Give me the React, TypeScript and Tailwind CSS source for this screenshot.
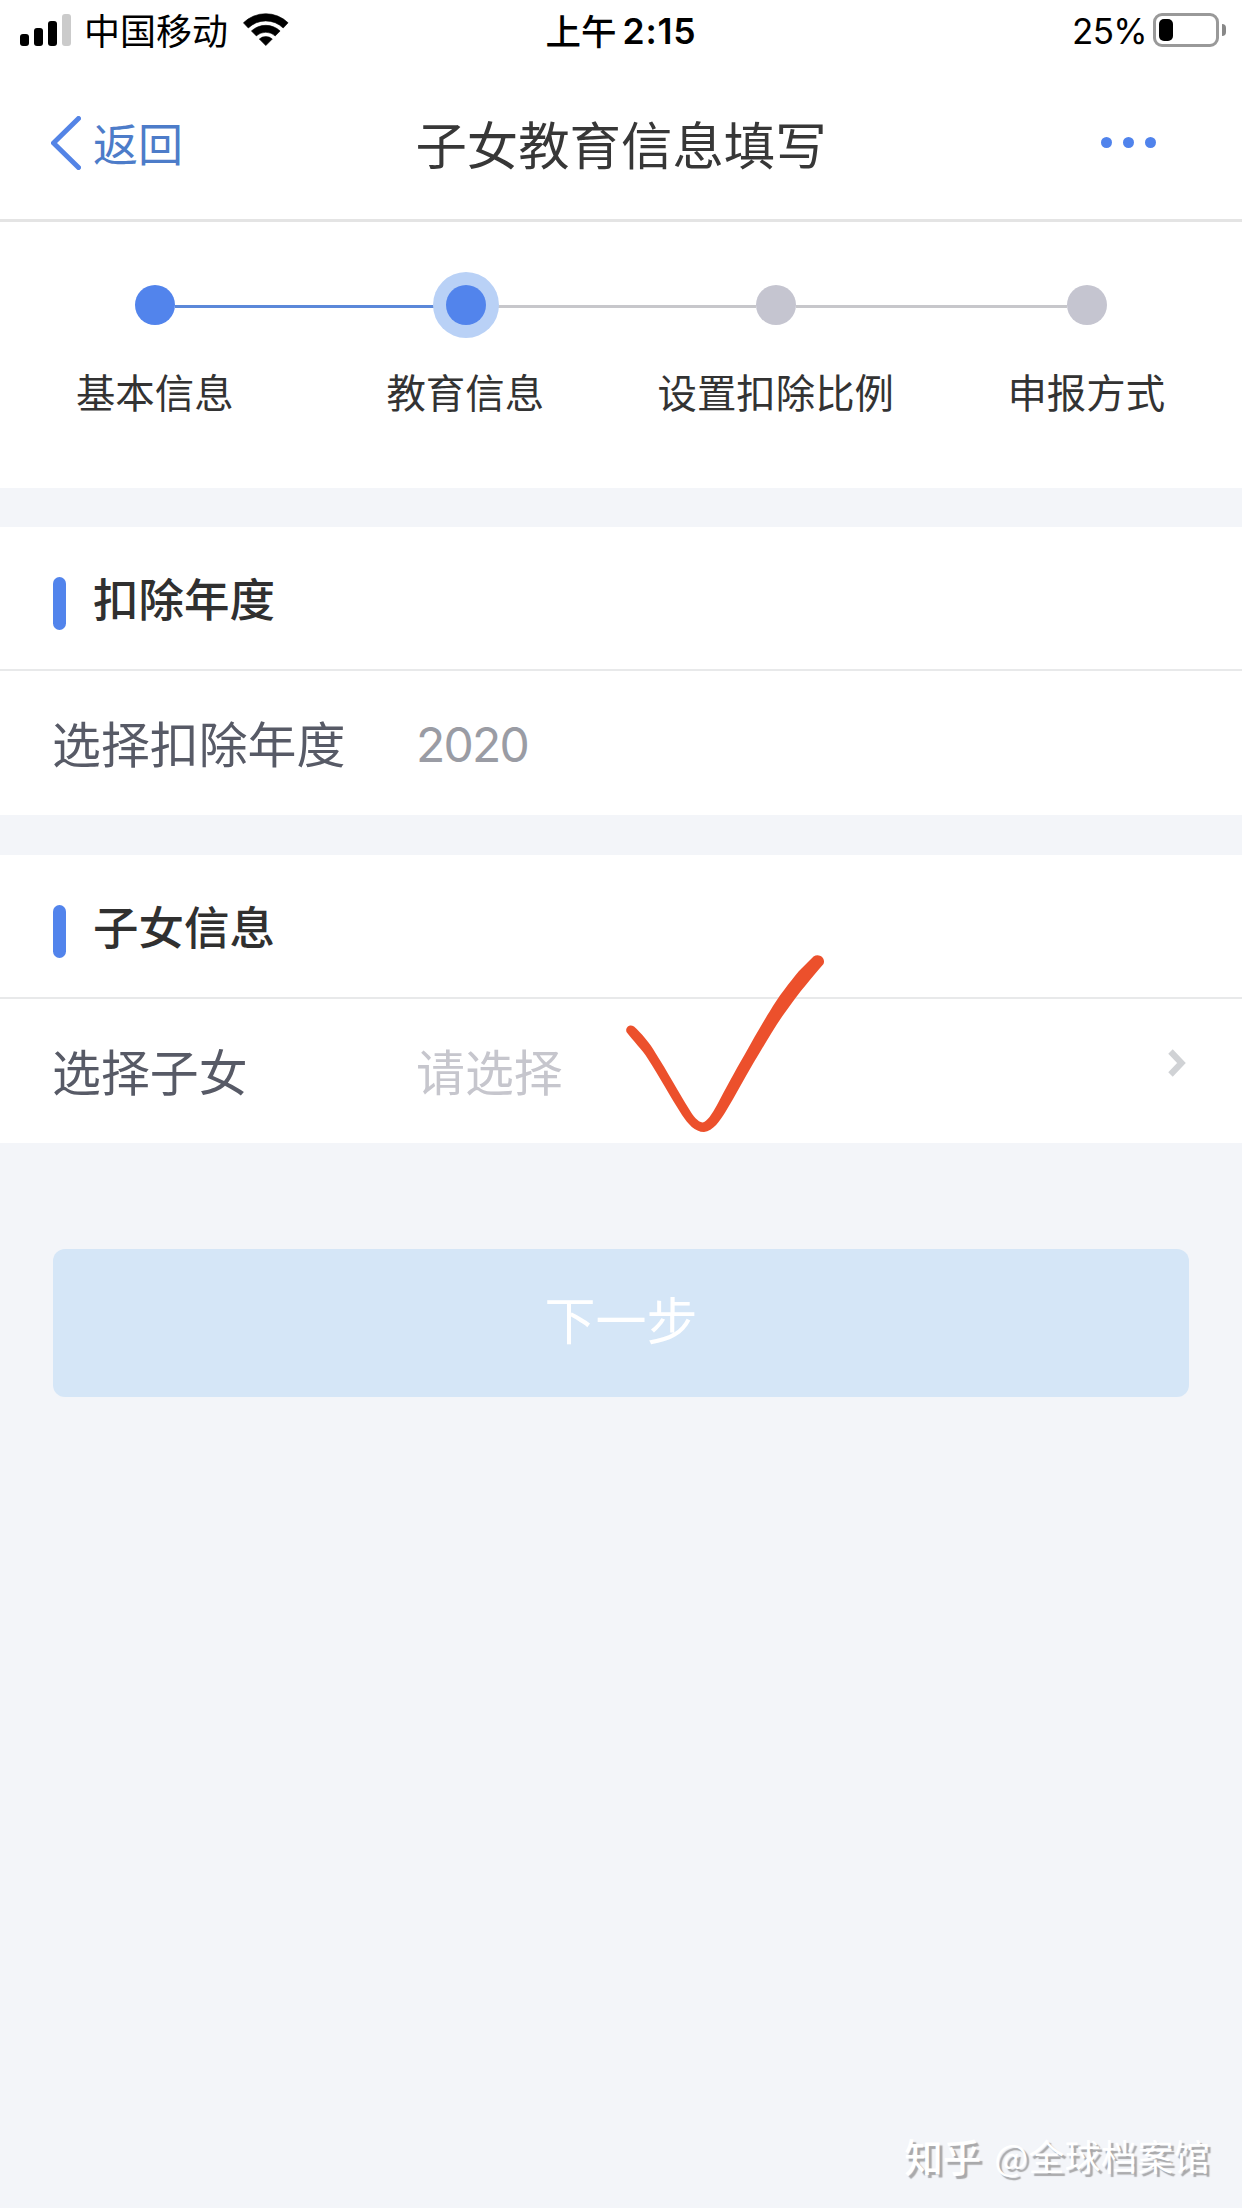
import React from "react";

type StepState = "done" | "current" | "todo";

const steps: { label: string; state: StepState }[] = [
  { label: "基本信息", state: "done" },
  { label: "教育信息", state: "current" },
  { label: "设置扣除比例", state: "todo" },
  { label: "申报方式", state: "todo" },
];

const cjk = "font-['Noto_Sans_CJK_SC',sans-serif]";
const latin = "font-['Inter','Noto_Sans_CJK_SC',sans-serif]";

function StatusBar() {
  return (
    <div className="grid h-[60px] grid-cols-[1fr_auto_1fr] items-start text-black">
      <div className="flex items-start pl-5">
        <div className="mt-[14px] flex h-8 items-end gap-[5px]">
          <span className="h-3 w-[9px] rounded-[3px] bg-black" />
          <span className="h-[18px] w-[9px] rounded-[3px] bg-black" />
          <span className="h-[25px] w-[9px] rounded-[3px] bg-black" />
          <span className="h-8 w-[9px] rounded-[3px] bg-[#cbcbcb]" />
        </div>
        <span className={`${cjk} mt-[11px] ml-[13px] text-[36px] leading-[36px]`}>中国移动</span>
        <svg className="mt-[13px] ml-[15px] h-[33px] w-[46px]" viewBox="0 0 46 33">
          <path d="M0.4 9.8 A32 32 0 0 1 45.1 9.8 L40.2 15 A25 25 0 0 0 5.3 15 Z" fill="#000" stroke="#000" strokeWidth="0.6" strokeLinejoin="round" />
          <path d="M8.4 18 A21 21 0 0 1 37.1 18 L32.2 22.9 A14 14 0 0 0 13.3 22.9 Z" fill="#000" stroke="#000" strokeWidth="0.6" strokeLinejoin="round" />
          <path d="M16.3 26 A10 10 0 0 1 29.3 26 L22.8 32.6 Z" fill="#000" stroke="#000" strokeWidth="0.6" strokeLinejoin="round" />
        </svg>
      </div>
      <div className="flex items-start">
        <span className={`${cjk} mt-[12px] text-[35.5px] leading-[36px] font-medium`}>上午</span>
        <span className={`${latin} mt-[14px] ml-[6px] text-[35.5px] leading-[36px] font-semibold tracking-[0.8px]`}>2:15</span>
      </div>
      <div className="flex items-start justify-end pr-4">
        <span className={`${latin} mt-[13px] text-[35px] leading-[36px] tracking-[-0.7px]`}>25%</span>
        <div className="mt-[13px] ml-[6px] flex h-[34px] w-[66px] items-center rounded-[9px] border-3 border-[#999] pl-[3px]">
          <span className="h-[22px] w-[14px] rounded-[5px] bg-black" />
        </div>
        <span className="mt-6 ml-[3px] h-3 w-1 rounded-r-full bg-[#888]" />
      </div>
    </div>
  );
}

function NavBar() {
  return (
    <div className="grid h-[162px] grid-cols-[1fr_auto_1fr] items-start border-b-3 border-[#e4e4e4]">
      <button className="flex items-start pl-[51px] text-left">
        <svg className="mt-[56px] h-[54px] w-[30px]" viewBox="0 0 30 54" fill="none">
          <path d="M27.5 2.5 L2.5 27 L27.5 51.5" stroke="#5484e6" strokeWidth="5" strokeLinecap="round" strokeLinejoin="round" />
        </svg>
        <span className={`${cjk} mt-[60px] ml-[12px] text-[45px] leading-[45px] text-[#4d7cc9]`}>返回</span>
      </button>
      <h1 className={`${cjk} mt-[57px] text-[51.4px] leading-[52px] text-[#373737]`}>子女教育信息填写</h1>
      <button className="mt-[77px] mr-[86px] flex gap-[11px] justify-self-end">
        <span className="size-[11px] rounded-full bg-[#5083ec]" />
        <span className="size-[11px] rounded-full bg-[#5083ec]" />
        <span className="size-[11px] rounded-full bg-[#5083ec]" />
      </button>
    </div>
  );
}

const dotClass: Record<StepState, string> = {
  done: "bg-[#5284ec]",
  current: "bg-[#5284ec] ring-[13px] ring-[#b9d1f6]",
  todo: "bg-[#c5c5d0]",
};

function lineClass(index: number) {
  if (index < 0 || index >= steps.length - 1) return "bg-transparent";
  return index === 0 ? "bg-[#5b88d9]" : "bg-[#c7c7cb]";
}

function Stepper() {
  return (
    <div className="grid h-[266px] grid-cols-4 bg-white pt-[63px]">
      {steps.map((step, i) => (
        <div key={step.label} className="flex flex-col items-center">
          <div className="flex w-full items-center">
            <span className={`mt-[3px] h-[3px] flex-1 ${lineClass(i - 1)}`} />
            <span className={`z-10 size-10 rounded-full ${dotClass[step.state]}`} />
            <span className={`mt-[3px] h-[3px] flex-1 ${lineClass(i)}`} />
          </div>
          <span className={`${cjk} mt-[46px] pr-px text-[39.4px] leading-[40px] whitespace-nowrap text-[#333]`}>{step.label}</span>
        </div>
      ))}
    </div>
  );
}

function SectionHeader({ title }: { title: string }) {
  return (
    <div className="flex h-[144px] items-start border-b-2 border-[#e8e9ea] bg-white pl-[53px]">
      <span className="mt-[50px] h-[53px] w-[13px] rounded-full bg-[#5284ec]" />
      <h2 className={`${cjk} mt-[47px] ml-[27px] text-[45.5px] leading-[46px] font-medium text-[#303030]`}>{title}</h2>
    </div>
  );
}

export default function App() {
  return (
    <div className="flex h-[2208px] w-[1242px] flex-col overflow-hidden bg-[#f3f5f9]">
      <header className="bg-white">
        <StatusBar />
        <NavBar />
      </header>
      <Stepper />

      <section className="mt-[39px]">
        <SectionHeader title="扣除年度" />
        <div className="flex h-[144px] items-start bg-white pl-[52px]">
          <span className={`${cjk} mt-[46px] w-[364px] text-[48.9px] leading-[49px] text-[#575a66]`}>选择扣除年度</span>
          <span className={`${latin} mt-[49px] text-[48px] leading-[49px] tracking-[-1.8px] text-[#9a9ca4]`}>2020</span>
        </div>
      </section>

      <section className="mt-[40px]">
        <SectionHeader title="子女信息" />
        <div className="relative flex h-[144px] items-start bg-white pr-[56px] pl-[52px]">
          <span className={`${cjk} mt-[46px] w-[364px] text-[48.9px] leading-[49px] text-[#575a66]`}>选择子女</span>
          <span className={`${cjk} mt-[46px] flex-1 text-[48.9px] leading-[49px] text-[#c6c6cd]`}>请选择</span>
          <svg className="mt-[50px] h-[28px] w-[18px]" viewBox="0 0 18 28" fill="none">
            <path d="M2.5 2.5 L13.5 14 L2.5 25.5" stroke="#d0d2d5" strokeWidth="6.2" />
          </svg>
          <svg className="absolute top-[-49px] left-[620px] h-[190px] w-[210px]" viewBox="620 950 210 190" fill="#ec502c">
            <path d="M626.5 1032 C625 1028 629 1023.5 634 1026.5 C641 1033 650 1043 655.5 1053 C667 1071 679 1093 689 1109 C693 1116 698 1122 702.5 1122.5 C707 1122 712 1114 717 1105 C725 1090 735 1071 745 1054 C754 1038 763 1022 770 1011 C778 997 790 982 799 971 L813.5 956.5 C819 952.5 826 958 823.5 964 C813 976 798 994 789 1007 C776 1024 765 1044 754 1062 C744 1079 735 1096 726 1111 C720 1121 713 1131 704 1132 C695 1132 688 1124 682 1115 C670 1096 659 1076 648 1059 C642 1049 633 1041 626.5 1032 Z" />
          </svg>
        </div>
      </section>

      <button className="mx-[53px] mt-[106px] flex h-[148px] shrink-0 items-start justify-center rounded-[12px] bg-[#d5e6f7]">
        <span className={`${cjk} mt-[43px] text-[51px] leading-[52px] text-white`}>下一步</span>
      </button>

      <footer
        className={`${cjk} mt-auto mr-[32px] mb-[31px] flex items-center justify-end text-[35.9px] leading-[44px] text-white [text-shadow:3px_3px_1px_#a9a9ab]`}
      >
        <span className="text-[38.5px] font-medium">知乎</span>
        <span className="ml-[13px] tracking-[0.4px]">@全球档案馆</span>
      </footer>
    </div>
  );
}
